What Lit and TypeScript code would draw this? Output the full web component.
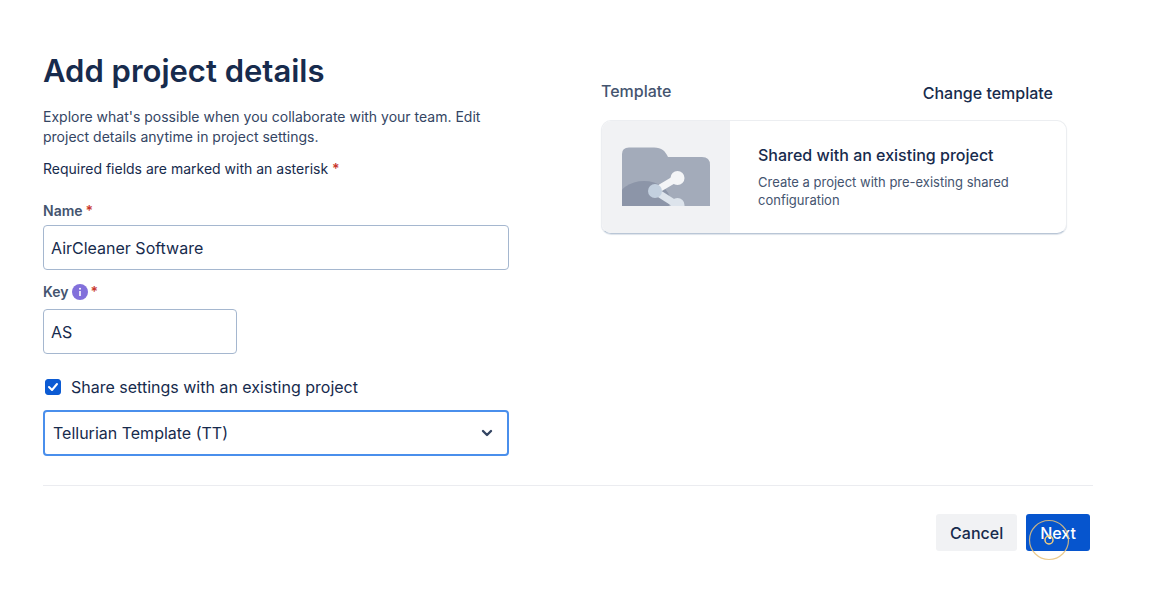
import { LitElement, html, css } from "lit";
import { customElement, state } from "lit/decorators.js";

@customElement("template-card")
export class TemplateCard extends LitElement {
  static styles = css`
    :host {
      display: block;
    }
    .card {
      display: flex;
      border-radius: 10px;
      overflow: hidden;
      background: #fff;
      border: 1px solid #eceef1;
      border-bottom-color: #b9c6d6;
      box-shadow: 0 1px 1px #dde3ea;
    }
    .picture {
      flex: 0 0 128px;
      display: flex;
      align-items: center;
      justify-content: center;
      background: #f1f2f4;
    }
    .picture svg {
      display: block;
    }
    .body {
      padding: 24px 28px;
    }
    .title {
      margin: 0;
      font-size: 16px;
      line-height: 20px;
      font-weight: 500;
      color: #172b4d;
    }
    .text {
      margin: 8px 0 0;
      font-size: 13px;
      line-height: 18px;
      color: #44546f;
    }
  `;

  render() {
    return html`
      <div class="card">
        <div class="picture">
          <svg width="88" height="60" viewBox="0 0 88 60" aria-hidden="true">
            <defs>
              <clipPath id="folder">
                <path d="M0 59V7Q0 0.500 7 0.500H32C40 0.500 43 4 46 10H80Q88 10 88 18V59Z" />
              </clipPath>
            </defs>
            <g clip-path="url(#folder)">
              <rect width="88" height="60" fill="#a3abba" />
              <ellipse cx="22" cy="53" rx="26" ry="19" fill="#8c95a8" />
              <path d="M33 44L55 31" stroke="#f4f5f7" stroke-width="7" />
              <path d="M33 44L55 58" stroke="#dde4ec" stroke-width="7" />
              <circle cx="55.500" cy="31" r="7" fill="#f4f5f7" />
              <circle cx="55.500" cy="58" r="7" fill="#dde4ec" />
              <circle cx="33" cy="44" r="7" fill="#c3d0df" />
            </g>
          </svg>
        </div>
        <div class="body">
          <h2 class="title">Shared with an existing project</h2>
          <p class="text">Create a project with pre-existing shared configuration</p>
        </div>
      </div>
    `;
  }
}

@customElement("app-root")
export class AppRoot extends LitElement {
  static styles = css`
    :host {
      display: block;
      box-sizing: border-box;
      padding: 48px 79px 48px 43px;
      background: #fff;
      color: #172b4d;
      font-family: Inter, "Liberation Sans", sans-serif;
    }
    .columns {
      display: grid;
      grid-template-columns: 1fr 1fr;
      gap: 92px;
      padding: 0 26px 29px 0;
      border-bottom: 1px solid #ebecf0;
    }
    .heading {
      margin: 0;
      font-size: 31px;
      line-height: 46px;
      font-weight: 600;
    }
    .intro {
      margin: 13px 0 0;
      font-size: 14px;
      line-height: 20px;
      color: #344563;
    }
    .required {
      margin: 12px 0 0;
      font-size: 14px;
      line-height: 20px;
    }
    .star {
      color: #c9372c;
      font-weight: 600;
    }
    .label {
      display: flex;
      align-items: center;
      gap: 3px;
      font-size: 14px;
      line-height: 20px;
      font-weight: 600;
      color: #44546f;
    }
    .name-label {
      margin-top: 22px;
    }
    .key-label {
      margin-top: 12px;
    }
    .info {
      display: block;
    }
    .input {
      display: block;
      box-sizing: border-box;
      width: 100%;
      height: 45px;
      margin: 4px 0 0;
      padding: 0 7px;
      border: 1px solid #a5b7cf;
      border-radius: 4px;
      background: #fff;
      color: #172b4d;
      font: inherit;
      font-size: 16px;
      outline: none;
    }
    .key {
      width: 194px;
      margin-top: 7px;
    }
    .share {
      display: flex;
      align-items: center;
      gap: 10px;
      margin-top: 22px;
      padding-left: 2px;
      font-size: 16px;
      line-height: 22px;
    }
    .tick {
      display: grid;
      place-items: center;
    }
    .tick input,
    .tick svg {
      grid-area: 1 / 1;
    }
    .tick input {
      appearance: none;
      width: 16px;
      height: 16px;
      margin: 0;
      border: 1px solid #8590a2;
      border-radius: 3px;
    }
    .tick input:checked {
      border-color: #0c5bd3;
      background: #0c5bd3;
    }
    .tick svg {
      pointer-events: none;
    }
    .select {
      display: grid;
      align-items: center;
      margin-top: 12px;
    }
    .select select,
    .select svg {
      grid-area: 1 / 1;
    }
    .select select {
      appearance: none;
      box-sizing: border-box;
      width: 100%;
      height: 46px;
      padding: 0 36px 0 8px;
      border: 2px solid #4a8fec;
      border-radius: 4px;
      background: #fff;
      color: #172b4d;
      font: inherit;
      font-size: 16px;
      outline: none;
    }
    .select svg {
      justify-self: end;
      margin-right: 16px;
      pointer-events: none;
    }
    .side {
      padding-top: 34px;
    }
    .side-head {
      display: flex;
      align-items: flex-start;
      justify-content: space-between;
      padding-right: 14px;
      margin-bottom: 16px;
    }
    .side-title {
      font-size: 16px;
      line-height: 18px;
      font-weight: 500;
      color: #44546f;
    }
    .change {
      padding: 0;
      border: 0;
      background: none;
      color: #172b4d;
      font: inherit;
      font-size: 16px;
      line-height: 22px;
      font-weight: 500;
    }
    .actions {
      display: flex;
      justify-content: flex-end;
      gap: 9px;
      padding: 28px 3px 0 0;
    }
    .button {
      position: relative;
      height: 37px;
      padding: 0 14px;
      border: 0;
      border-radius: 3px;
      background: #f1f2f4;
      color: #172b4d;
      font: inherit;
      font-size: 16px;
      font-weight: 500;
    }
    .primary {
      background: #0655ce;
      color: #fff;
    }
    .pointer {
      position: absolute;
      left: 2px;
      top: 5px;
      pointer-events: none;
    }
  `;

  @state() private name = "AirCleaner Software";
  @state() private key = "AS";
  @state() private shared = true;

  render() {
    return html`
      <main>
        <div class="columns">
          <form>
            <h1 class="heading">Add project details</h1>
            <p class="intro">
              Explore what's possible when you collaborate with your team. Edit
              project details anytime in project settings.
            </p>
            <p class="required">
              Required fields are marked with an asterisk <span class="star">*</span>
            </p>
            <label class="label name-label" for="name">Name<span class="star">*</span></label>
            <input
              class="input"
              id="name"
              required
              .value=${this.name}
              @input=${(e: Event) => (this.name = (e.target as HTMLInputElement).value)}
            />
            <label class="label key-label" for="key">
              Key
              <svg class="info" width="16" height="16" viewBox="0 0 16 16" aria-hidden="true">
                <circle cx="8" cy="8" r="8" fill="#8270db" />
                <circle cx="8" cy="4.800" r="1" fill="#fff" />
                <path d="M8 7V12" stroke="#fff" stroke-width="1.600" />
              </svg>
              <span class="star">*</span>
            </label>
            <input
              class="input key"
              id="key"
              required
              .value=${this.key}
              @input=${(e: Event) => (this.key = (e.target as HTMLInputElement).value)}
            />
            <label class="share">
              <span class="tick">
                <input
                  type="checkbox"
                  .checked=${this.shared}
                  @change=${(e: Event) => (this.shared = (e.target as HTMLInputElement).checked)}
                />
                <svg width="16" height="16" viewBox="0 0 16 16" aria-hidden="true">
                  <path d="M4 8L7 11L12 5" fill="none" stroke="#fff" stroke-width="2" stroke-linecap="round" stroke-linejoin="round" />
                </svg>
              </span>
              Share settings with an existing project
            </label>
            <div class="select">
              <select aria-label="Existing project">
                <option>Tellurian Template (TT)</option>
              </select>
              <svg width="12" height="8" viewBox="0 0 12 8" aria-hidden="true">
                <path d="M2 2L6 6L10 2" fill="none" stroke="#344563" stroke-width="2.400" stroke-linecap="round" stroke-linejoin="round" />
              </svg>
            </div>
          </form>
          <section class="side">
            <div class="side-head">
              <span class="side-title">Template</span>
              <button class="change" type="button">Change template</button>
            </div>
            <template-card></template-card>
          </section>
        </div>
        <div class="actions">
          <button class="button" type="button">Cancel</button>
          <button class="button primary" type="button">
            Next
            <svg class="pointer" width="42" height="42" viewBox="0 0 42 42" aria-hidden="true">
              <circle cx="21" cy="21" r="19.500" fill="none" stroke="#e8c27a" stroke-opacity="0.850" stroke-width="1.200" />
              <circle cx="21" cy="21" r="4" fill="none" stroke="#f5cf7d" stroke-width="1.500" />
            </svg>
          </button>
        </div>
      </main>
    `;
  }
}
